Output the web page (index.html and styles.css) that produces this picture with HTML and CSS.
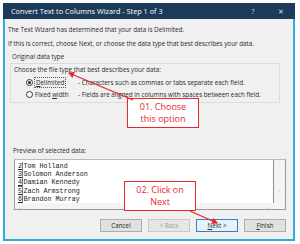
FILE: index.html
```html
<!DOCTYPE html>
<html>
<head>
<meta charset="utf-8">
<link rel="stylesheet" href="styles.css">
</head>
<body>
<div class="win">
  <div class="titlebar">
    <span class="title">Convert Text to Columns Wizard - Step 1 of 3</span>
    <span class="tctl">?</span>
    <span class="tctl close">✕</span>
  </div>
  <div class="body">
    <p class="line l1">The Text Wizard has determined that your data is Delimited.</p>
    <p class="line l2">If this is correct, choose Next, or choose the data type that best describes your data.</p>
    <p class="line gtitle">Original data type</p>
    <div class="gbox">
      <p class="line choose">Choose the file type that best describes your data:</p>
      <div class="opt">
        <span class="radio on"></span><span class="optlabel"><span class="focus"><u>D</u>elimited</span></span>
        <span class="desc">- Characters such as commas or tabs separate each field.</span>
      </div>
      <div class="opt">
        <span class="radio"></span><span class="optlabel">Fixed <u>w</u>idth</span>
        <span class="desc">- Fields are aligned in columns with spaces between each field.</span>
      </div>
    </div>
    <p class="line plabel">Preview of selected data:</p>
    <div class="preview">
      <div class="pcontent">
        <div class="row"><span class="num">2</span>Tom Holland</div>
        <div class="row"><span class="num">3</span>Solomon Anderson</div>
        <div class="row"><span class="num">4</span>Damian Kennedy</div>
        <div class="row"><span class="num">5</span>Zach Armstrong</div>
        <div class="row"><span class="num">6</span>Brandon Murray</div>
      </div>
      <div class="vscroll"><span>˄</span><span>˅</span></div>
      <div class="hscroll"><span>‹</span><span>›</span></div>
      <div class="corner"></div>
    </div>
    <div class="buttons">
      <span class="btn">Cancel</span>
      <span class="btn dis">&lt; Back</span>
      <span class="btn def"><u>N</u>ext &gt;</span>
      <span class="btn"><u>F</u>inish</span>
    </div>
  </div>
  <div class="note n1">01. Choose<br>this option</div>
  <div class="note n2">02. Click on<br>Next</div>
  <svg class="arrows" width="292" height="238" viewBox="0 0 292 238">
    <defs>
      <marker id="ah" viewBox="0 0 10 10" refX="8" refY="5" markerWidth="5" markerHeight="5" orient="auto">
        <path d="M0 0 L10 5 L0 10 Z" fill="#e8262d"/>
      </marker>
    </defs>
    <line x1="130" y1="97" x2="66" y2="70" stroke="#e8262d" stroke-width="1.3" marker-end="url(#ah)"/>
    <line x1="187" y1="208" x2="214" y2="220" stroke="#e8262d" stroke-width="1.3" marker-end="url(#ah)"/>
  </svg>
</div>
</body>
</html>
```
FILE: styles.css
```css
* { box-sizing: border-box; }
html, body { margin: 0; padding: 0; background: #fff; }
body { width: 300px; height: 244px; overflow: hidden; }
.win {
  position: relative;
  margin: 3px 0 0 3px;
  width: 292px;
  height: 238px;
  border: 2px solid #35ace0;
  border-top: 0;
  background: #f0f0f0;
  font-family: "Open Sans", "Noto Sans", sans-serif;
  font-size: 6.3px;
  color: #2a2a2a;
}
.titlebar {
  height: 16px;
  margin: 0 -2px;
  background: #1c3a5a;
  color: #fff;
  display: flex;
  align-items: center;
  padding: 0 0 0 8px;
  font-size: 7.3px;
}
.title { flex: 1; }
.tctl { width: 28px; text-align: center; font-size: 7px; color: #d8dde4; }
.body { padding: 4px 4px 0 3px; }
.line { margin: 0; line-height: 14px; white-space: nowrap; }
.gtitle { line-height: 12px; padding-left: 4px; }
.gbox {
  margin: 0 9px 0 2px;
  padding: 0 0 2px 3px;
  border: 1px solid #dcdcdc;
  border-radius: 1px;
}
.gbox .choose { line-height: 12px; }
.opt { display: flex; align-items: center; height: 12px; padding-left: 12px; white-space: nowrap; }
.radio {
  width: 7px; height: 7px; border-radius: 50%;
  border: 1px solid #333; background: #fff;
  display: inline-flex; align-items: center; justify-content: center;
  margin-right: 2px;
}
.radio.on::after { content: ""; width: 3px; height: 3px; border-radius: 50%; background: #222; }
.optlabel { width: 40px; }
.focus { outline: 1px dotted #555; outline-offset: 0; padding: 0 1px; }
.desc { margin-left: 3px; }
.plabel { margin-top: 42px; line-height: 12px; padding-left: 5px; }
.preview {
  margin: 2px 3px 0 6px;
  height: 51px;
  border: 1px solid #9a9a9a;
  border-top-color: #b9b9b9;
  background: #f4f4f4;
  display: grid;
  grid-template-columns: 1fr 11px;
  grid-template-rows: 1fr 9px;
}
.pcontent {
  background: #fff;
  border-right: 1px solid #8c8c8c;
  padding: 2px 0 0 3px;
  font-family: "Liberation Mono", monospace;
  font-size: 6.7px;
  color: #222;
}
.row { height: 8.2px; line-height: 8.2px; white-space: nowrap; display: flex; }
.num { width: 4.5px; border: 1px solid #777; border-width: 0 1px 1px 0; margin-right: 1px; text-decoration: underline; }
.vscroll { display: flex; flex-direction: column; justify-content: space-between; align-items: center; color: #aaa; font-size: 7px; padding: 2px 0 6px; line-height: 6px; }
.hscroll { display: flex; justify-content: space-between; color: #aaa; font-size: 8px; line-height: 9px; padding: 0 4px 0 3px; }
.buttons { display: flex; justify-content: flex-end; gap: 6px; margin-top: 9px; padding-right: 3px; }
.btn {
  width: 42px; height: 13px;
  background: #e1e1e1;
  border: 1px solid #adadad;
  display: flex; align-items: center; justify-content: center;
}
.btn.dis { color: #a0a0a0; border-color: #c8c8c8; background: #e6e6e6; }
.btn.def { border-color: #3a7fc0; background: #e5f1fb; }
.note {
  position: absolute;
  background: #fff;
  border: 1px solid #e8262d;
  color: #e8262d;
  font-size: 9px;
  line-height: 12px;
  text-align: center;
  width: 72px;
  padding: 2px 0;
}
.n1 { left: 122px; top: 95px; }
.n2 { left: 119px; top: 178px; }
.arrows { position: absolute; left: -2px; top: 0; pointer-events: none; }
```
